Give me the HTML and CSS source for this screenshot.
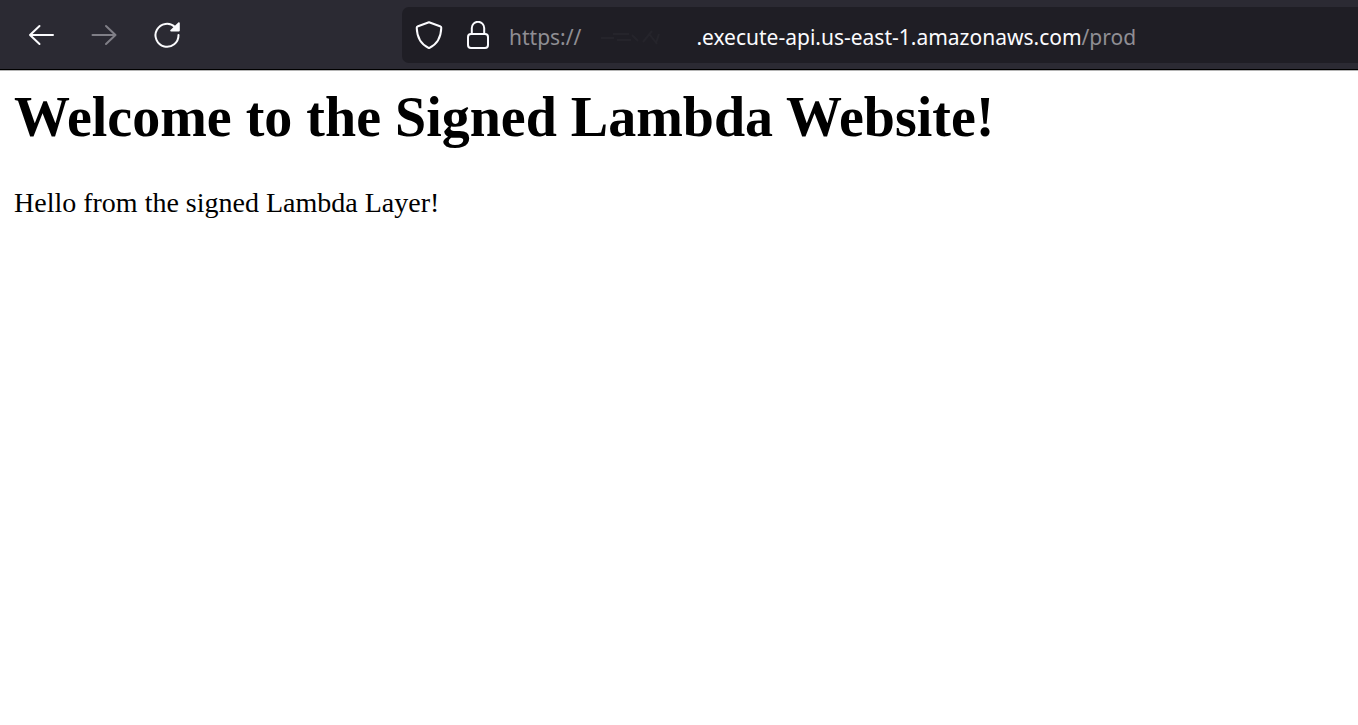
FILE: index.html
```
<!DOCTYPE html>
<html lang="en">
<head>
    <meta charset="UTF-8">
    <meta name="viewport" content="width=device-width, initial-scale=1.0">
    <title>Signed Lambda Website</title>
    <link rel="stylesheet" href="styles.css">
</head>
<body>
    <header class="toolbar">
        <nav class="nav-buttons">
            <button class="nav-button" type="button" aria-label="Back">
                <svg class="icon" viewBox="0 0 28 28">
                    <path d="M26 14H3M12.500 5L3 14l9.500 9"/>
                </svg>
            </button>
            <button class="nav-button" type="button" aria-label="Forward" disabled>
                <svg class="icon" viewBox="0 0 28 28">
                    <path d="M2.500 14h23M16 5l9.500 9-9.500 9"/>
                </svg>
            </button>
            <button class="nav-button" type="button" aria-label="Reload">
                <svg class="icon" viewBox="0 0 28 28">
                    <path d="M25.500 14A11.500 11.500 0 1 1 22 6"/>
                    <path class="fill" d="M26.800 2.200v7.400c0 .5-.4.900-.9.900h-7.800c-.8 0-1.200-.9-.6-1.500l7.800-7.400c.6-.6 1.500-.2 1.500.6z"/>
                </svg>
            </button>
        </nav>
        <div class="urlbar">
            <button class="url-button" type="button" aria-label="Tracking protection">
                <svg class="icon" viewBox="0 0 28 28">
                    <path d="M14 1.200L25 5.200c.8.300 1.300.8 1.300 1.600C26 16.500 22 23.500 14 27.200 6 23.500 2 16.500 1.700 6.800c0-.8.500-1.300 1.300-1.600z"/>
                </svg>
            </button>
            <button class="url-button" type="button" aria-label="Connection secure">
                <svg class="icon" viewBox="0 0 28 28">
                    <rect x="4" y="13" width="20" height="14" rx="3"/>
                    <path d="M7.800 13V7a6.200 6.200 0 0 1 12.400 0v6"/>
                </svg>
            </button>
            <div class="url" role="textbox" aria-label="Address" contenteditable="true" spellcheck="false"><span>https://</span><svg class="smudge" viewBox="0 0 115 28" aria-hidden="true"><path d="M20 15h13M32 11h16M36 17h14M51 12l6 6M62 19l9-11M69 12l7 9M78 11l-3 9"/></svg><span class="host">.execute-api.us-east-1.amazonaws.com</span><span>/prod</span></div>
        </div>
    </header>
    <main class="content">
        <h1>Welcome to the Signed Lambda Website!</h1>
        <p>Hello from the signed Lambda Layer!</p>
    </main>
</body>
</html>
```
FILE: styles.css
```
body {
    margin: 0;
    background-color: #fff;
    color: #000;
    font-family: "Liberation Serif", "Times New Roman", serif;
}

.toolbar {
    display: flex;
    align-items: center;
    box-sizing: border-box;
    height: 70px;
    background-color: #2b2a33;
    border-bottom: 1px solid #000;
    box-shadow: 0 1px 0 #b5b5b5;
}

.nav-buttons {
    display: flex;
    padding-left: 9px;
}

.nav-button,
.url-button {
    display: flex;
    align-items: center;
    justify-content: center;
    height: 56px;
    padding: 0;
    border: 0;
    background: none;
    color: #fbfbfe;
}

.nav-button {
    width: 63px;
}

.nav-button:disabled {
    color: #807f87;
}

.icon {
    width: 28px;
    height: 28px;
    fill: none;
    stroke: currentColor;
    stroke-width: 2;
    stroke-linecap: round;
    stroke-linejoin: round;
}

.icon .fill {
    fill: currentColor;
    stroke: none;
}

.urlbar {
    display: flex;
    flex: 1;
    align-items: center;
    height: 56px;
    margin-left: 204px;
    padding-left: 2px;
    border-radius: 7px 0 0 7px;
    background-color: #1f1e25;
}

.url-button {
    width: 49px;
}

.url {
    display: flex;
    flex: 1;
    align-items: center;
    padding: 4px 0 0 7px;
    color: #8f8e94;
    font-family: "Segoe UI", "Noto Sans", sans-serif;
    font-size: 21px;
    line-height: 28px;
    white-space: nowrap;
    outline: none;
}

.host {
    color: #fbfbfe;
}

/* hidden API id */
.smudge {
    width: 115px;
    height: 28px;
    fill: none;
    stroke: #25242b;
    stroke-width: 2;
}

.content {
    padding: 16px 14px;
}

h1 {
    margin: 0;
    font-size: 56px;
    line-height: 62px;
}

p {
    margin: 39px 0 0;
    font-size: 28px;
    line-height: 32px;
}
```
